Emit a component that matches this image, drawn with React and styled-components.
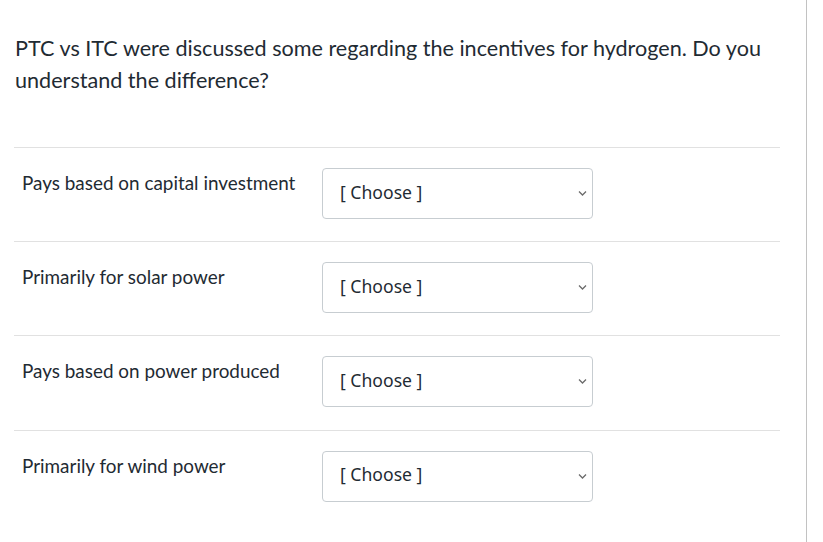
import React from "react";
import styled, { createGlobalStyle } from "styled-components";

const Global = createGlobalStyle`
  html, body { margin: 0; padding: 0; background: #fff; }
  body { font-family: Lato, "Helvetica Neue", Arial, sans-serif; color: #2d3b45; }
`;

const Page = styled.div`
  width: 807px;
  height: 542px;
  border-right: 1px solid #c2c2c2;
  box-sizing: border-box;
  overflow: hidden;
`;

const Question = styled.div`
  padding: 32px 0 0 15px;
  font-size: 21.6px;
  line-height: 32px;
  color: #1f2b33;
  height: 115px;
`;

const Answers = styled.div`
  margin-left: 14px;
  width: 766px;
`;

const Row = styled.div`
  display: flex;
  align-items: flex-start;
  height: 94.2px;
  border-top: 1px solid #e1e1e1;
  box-sizing: border-box;
`;

const Label = styled.div`
  width: 300px;
  padding: 22px 0 0 8px;
  font-size: 18.9px;
  line-height: 26px;
  color: #1f2b33;
`;

const SelectWrap = styled.div`
  position: relative;
  margin-top: 20px;
  width: 271px;
  height: 51px;
`;

const Select = styled.select`
  appearance: none;
  width: 100%;
  height: 100%;
  box-sizing: border-box;
  border: 1px solid #c7cdd1;
  border-radius: 4px;
  background: #fff;
  padding: 0 0 4px 17px;
  font-family: "Noto Sans", "Open Sans", sans-serif;
  font-size: 17.6px;
  color: #1f2b33;
`;

const Chevron = styled.svg`
  position: absolute;
  right: 6px;
  top: 22px;
  width: 9px;
  height: 7px;
  pointer-events: none;
`;

const items = [
  "Pays based on capital investment",
  "Primarily for solar power",
  "Pays based on power produced",
  "Primarily for wind power",
];

export default function App() {
  return (
    <>
      <Global />
      <Page>
        <Question>
          PTC vs ITC were discussed some regarding the incentives for hydrogen. Do you
          <br />
          understand the difference?
        </Question>
        <Answers>
          {items.map((t) => (
            <Row key={t}>
              <Label>{t}</Label>
              <SelectWrap>
                <Select defaultValue="">
                  <option value="">[ Choose ]</option>
                  <option>PTC</option>
                  <option>ITC</option>
                </Select>
                <Chevron viewBox="0 0 9 7">
                  <path d="M1 1.5 L4.5 5 L8 1.5" fill="none" stroke="#6b6b6b" strokeWidth="1.3" />
                </Chevron>
              </SelectWrap>
            </Row>
          ))}
        </Answers>
      </Page>
    </>
  );
}
